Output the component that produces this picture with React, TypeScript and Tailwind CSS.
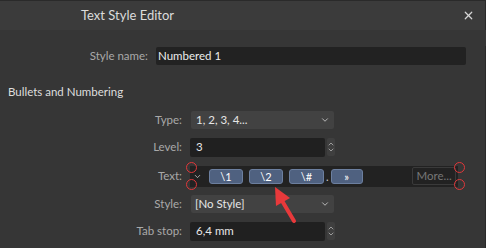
import { ChevronDown, ChevronUp, X } from "lucide-react";

const font = { fontFamily: '"Segoe UI", Lato, "Noto Sans", sans-serif' };

function Spinner() {
  return (
    <div className="ml-[2px] flex h-[18px] w-[8px] flex-col items-center justify-center rounded-[2px] bg-[#3f3f3f] text-[#c8c8c8]">
      <ChevronUp size={8} strokeWidth={2} className="-mb-[1px]" />
      <ChevronDown size={8} strokeWidth={2} className="-mt-[1px]" />
    </div>
  );
}

function Label({ children }: { children: React.ReactNode }) {
  return <div className="w-[182px] text-right text-[11.5px] text-[#a9a9a9]">{children}</div>;
}

function Token({ text, w }: { text: string; w: string }) {
  return (
    <div
      className={`flex h-[15px] ${w} items-center justify-center rounded-[3px] border border-[#6c7f9f] bg-[#4f6180] text-[11px] leading-none text-white`}
    >
      {text}
    </div>
  );
}

function Ring({ cls }: { cls: string }) {
  return <div className={`absolute h-[11px] w-[11px] rounded-full border-[1.5px] border-[#e0383a] ${cls}`} />;
}

export default function App() {
  return (
    <div className="relative h-[248px] w-[486px] overflow-hidden bg-[#363636]" style={font}>
      {/* Title bar */}
      <div className="flex h-[30px] items-center border-t border-[#2a2a2a] border-r border-r-[#2a2a2a] bg-[#3b3b3b] pl-[81px] pr-[10px]">
        <div className="flex-1 text-[13px] text-[#dcdcdc]">Text Style Editor</div>
        <X size={13} strokeWidth={2.2} className="text-[#d6d6d6]" />
      </div>

      <div className="h-[218px] border-r border-[#2a2a2a]">
        {/* Style name */}
        <div className="mt-[16px] flex h-[20px] items-center">
          <div className="w-[148px] text-right text-[11.5px] text-[#a9a9a9]">Style name:</div>
          <div className="ml-[8px] flex h-[18px] w-[310px] items-center rounded-[2px] bg-[#222222] px-[2px] text-[11.5px] text-[#ececec]">
            Numbered 1
          </div>
        </div>

        <div className="mt-[16px] flex h-[20px] items-center pl-[8px] text-[11.5px] text-[#dedede]">
          Bullets and Numbering
        </div>

        {/* Type */}
        <div className="mt-[8px] flex h-[20px] items-center">
          <Label>Type:</Label>
          <div className="ml-[9px] flex h-[18px] w-[143px] items-center justify-between rounded-[2px] bg-[#424242] pl-[5px] pr-[4px] text-[11.5px] text-[#e6e6e6]">
            <span>1, 2, 3, 4...</span>
            <ChevronDown size={10} strokeWidth={2} className="text-[#cfcfcf]" />
          </div>
        </div>

        {/* Level */}
        <div className="mt-[7px] flex h-[20px] items-center">
          <Label>Level:</Label>
          <div className="ml-[8px] flex h-[19px] w-[135px] items-center rounded-[2px] bg-[#202020] pl-[6px] text-[11.5px] text-[#e6e6e6]">
            3
          </div>
          <Spinner />
        </div>

        {/* Text */}
        <div className="mt-[8px] flex h-[22px] items-center">
          <Label>Text:</Label>
          <div className="ml-[8px] flex h-[21px] w-[268px] items-center bg-[#222222] pr-[2px]">
            <ChevronDown size={9} strokeWidth={2} className="ml-[3px] text-[#cfcfcf]" />
            <div className="ml-[7px] flex items-center gap-[6px]">
              <Token text="\1" w="w-[34px]" />
              <Token text="\2" w="w-[34px]" />
              <Token text="\#" w="w-[35px]" />
            </div>
            <span className="mx-[2px] text-[11px] leading-none text-[#cfcfcf]">.</span>
            <Token text="»" w="w-[32px]" />
            <div className="ml-auto flex h-[18px] w-[44px] items-center justify-center rounded-[2px] border border-[#3a3a3a] text-[11.5px] text-[#777777]">
              More...
            </div>
          </div>
        </div>

        {/* Style */}
        <div className="mt-[7px] flex h-[20px] items-center">
          <Label>Style:</Label>
          <div className="ml-[9px] flex h-[18px] w-[143px] items-center justify-between rounded-[2px] bg-[#424242] pl-[4px] pr-[4px] text-[11.5px] text-[#e6e6e6]">
            <span>[No Style]</span>
            <ChevronDown size={10} strokeWidth={2} className="text-[#cfcfcf]" />
          </div>
        </div>

        {/* Tab stop */}
        <div className="mt-[7px] flex h-[20px] items-center">
          <Label>Tab stop:</Label>
          <div className="ml-[8px] flex h-[19px] w-[135px] items-center rounded-[2px] bg-[#202020] pl-[6px] text-[11.5px] text-[#e6e6e6]">
            6,4 mm
          </div>
          <Spinner />
        </div>
      </div>

      {/* Annotations */}
      <Ring cls="left-[186px] top-[162px]" />
      <Ring cls="left-[186px] top-[179px]" />
      <Ring cls="left-[454px] top-[162px]" />
      <Ring cls="left-[454px] top-[179px]" />
      <svg className="absolute left-0 top-0" width="486" height="248" viewBox="0 0 486 248">
        <line x1="294" y1="221" x2="281" y2="199" stroke="#e8393b" strokeWidth="4" strokeLinecap="round" />
        <polygon points="275,187 290,198 276,206" fill="#e8393b" />
      </svg>
    </div>
  );
}
